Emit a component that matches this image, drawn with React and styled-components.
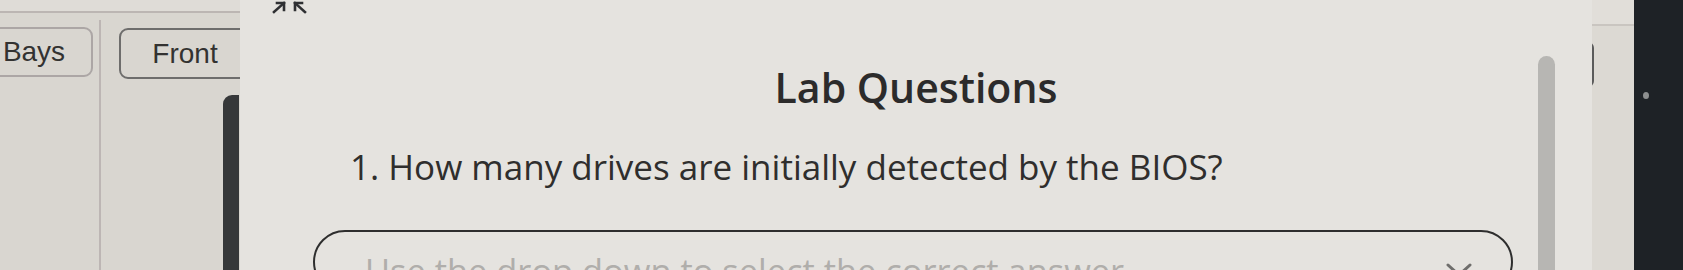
import React from 'react';
import styled, { createGlobalStyle } from 'styled-components';

const GlobalStyle = createGlobalStyle`
    html, body {
        margin: 0;
        padding: 0;
        height: 270px;
        overflow: hidden;
        background: #dad7d1;
    }
    #root {
        height: 270px;
    }
`

const Screen = styled.div`
    display: flex;
    flex-flow: row nowrap;
    height: 270px;
    overflow: hidden;
`

const SidePanel = styled.div`
    width: 240px;
    flex: none;
    display: flex;
    flex-flow: column nowrap;
    overflow: hidden;
    background: #d9d6d0;
    font-family: "Liberation Sans", Arial, sans-serif;
`

const TopStrip = styled.div`
    height: 11px;
    flex: none;
    background: #dfdcd7;
    border-bottom: 2px solid #bcb6b3;
`

const PanelBody = styled.div`
    flex: 1;
    display: flex;
    flex-flow: row nowrap;
    min-height: 0;
`

const BaysColumn = styled.div`
    width: 101px;
    flex: none;
    border-right: 2px solid #bdb6b4;
    padding-top: 7px;
    margin-top: 7px;
    box-sizing: border-box;
`

const FrontColumn = styled.div`
    flex: 1;
    min-width: 0;
    display: flex;
    flex-flow: column nowrap;
    padding-top: 15px;
    padding-left: 18px;
`

const TabButton = styled.div`
    box-sizing: border-box;
    height: ${p => p.$h}px;
    width: ${p => p.$w}px;
    margin-left: ${p => p.$offset || 0}px;
    flex: none;
    display: flex;
    align-items: center;
    justify-content: center;
    border: 2px solid ${p => p.$dark ? '#6e6d6c' : '#aca6a5'};
    border-radius: 9px;
    font-size: 28px;
    color: #333231;
    background: #d9d6d0;
`

const EdgeBar = styled.div`
    align-self: flex-end;
    width: 16px;
    flex: 1;
    margin: 16px 1px 0 0;
    background: #363839;
    border-top-left-radius: 9px;
`

const Modal = styled.div`
    position: relative;
    width: 1352px;
    flex: none;
    background: #e5e3df;
    font-family: "Open Sans", "Noto Sans", sans-serif;
    color: #2f2e2d;
    display: flex;
    flex-flow: column nowrap;
`

const IconRow = styled.div`
    height: 14px;
    padding-left: 32px;
    display: flex;
    align-items: flex-start;
`

const Title = styled.h2`
    margin: 49px 0 0;
    font-size: 41px;
    line-height: 48px;
    font-weight: 600;
    text-align: center;
    color: #2c2b2b;
`

const Question = styled.p`
    margin: 35px 0 0 110px;
    font-size: 35px;
    line-height: 42px;
    font-weight: 400;
    color: #2f2e2d;
`

const Dropdown = styled.div`
    margin: 42px 0 0 73px;
    width: 1200px;
    height: 120px;
    box-sizing: border-box;
    border: 2px solid #2e2e2e;
    border-radius: 38px;
    display: flex;
    justify-content: space-between;
    align-items: flex-start;
    padding: 18px 38px 0 50px;
`

const Placeholder = styled.span`
    font-size: 34.4px;
    line-height: 42px;
    color: #b0aeab;
`

const Chevron = styled.svg`
    margin-top: 12px;
    flex: none;
`

const ScrollThumb = styled.div`
    position: absolute;
    top: 56px;
    right: 37px;
    width: 17px;
    height: 260px;
    border-radius: 9px;
    background: #b7b6b3;
`

const RightStrip = styled.div`
    width: 42px;
    flex: none;
    display: flex;
    flex-flow: column nowrap;
    background: #dcd9d3;
`

const StripTop = styled.div`
    height: 24px;
    background: #e1ded9;
    border-bottom: 2px solid #c9c5c0;
`

const HiddenButtonEdge = styled.div`
    margin: 16px 0 0 -10px;
    width: 12px;
    height: 45px;
    box-sizing: border-box;
    border: 2px solid #5b5b5b;
    border-left: none;
    border-radius: 0 6px 6px 0;
`

const DarkEdge = styled.div`
    flex: 1;
    background: #1e2226;
    padding: 92px 0 0 9px;
`

const Speck = styled.div`
    width: 6px;
    height: 7px;
    border-radius: 50%;
    background: #8d8f8f;
`

const CollapseIcon = () => (
    <svg width="36" height="14" viewBox="0 0 36 14" fill="none" stroke="#2f3033" strokeWidth="2.6" strokeLinecap="square">
        <path d="M2 12 L12 3" />
        <path d="M5 3 L12 3 L12 10" />
        <path d="M33 12 L23 3" />
        <path d="M30 3 L23 3 L23 10" />
    </svg>
)

const App = () => {
    return (
        <>
            <GlobalStyle />
            <Screen>
                <SidePanel>
                    <TopStrip />
                    <PanelBody>
                        <BaysColumn>
                            <TabButton $w={118} $h={50} $offset={-25}>Bays</TabButton>
                        </BaysColumn>
                        <FrontColumn>
                            <TabButton $w={132} $h={51} $dark>Front</TabButton>
                            <EdgeBar />
                        </FrontColumn>
                    </PanelBody>
                </SidePanel>
                <Modal>
                    <IconRow>
                        <CollapseIcon />
                    </IconRow>
                    <Title>Lab Questions</Title>
                    <Question>1. How many drives are initially detected by the BIOS?</Question>
                    <Dropdown>
                        <Placeholder>Use the drop down to select the correct answer</Placeholder>
                        <Chevron width="28" height="16" viewBox="0 0 28 16" fill="none" stroke="#6f6e6c" strokeWidth="3" strokeLinecap="round">
                            <path d="M3 3 L14 13 L25 3" />
                        </Chevron>
                    </Dropdown>
                    <ScrollThumb />
                </Modal>
                <RightStrip>
                    <StripTop />
                    <HiddenButtonEdge />
                </RightStrip>
                <DarkEdge>
                    <Speck />
                </DarkEdge>
            </Screen>
        </>
    )
}

export default App
